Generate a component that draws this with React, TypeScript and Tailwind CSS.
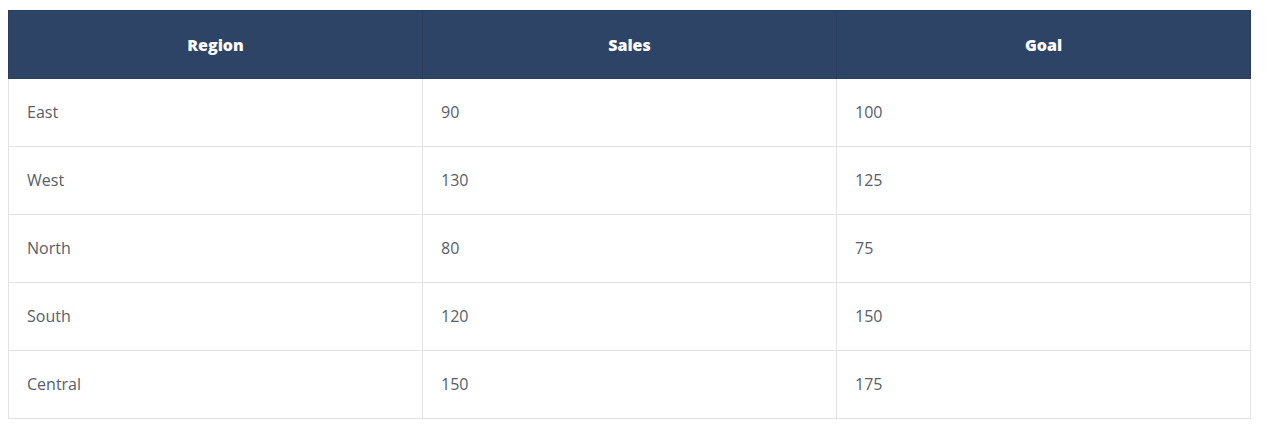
import React from 'react';

const rows = [
  { region: 'East', sales: 90, goal: 100 },
  { region: 'West', sales: 130, goal: 125 },
  { region: 'North', sales: 80, goal: 75 },
  { region: 'South', sales: 120, goal: 150 },
  { region: 'Central', sales: 150, goal: 175 },
];

const headers = ['Region', 'Sales', 'Goal'];

export default function App() {
  return (
    <div className="bg-white pl-2 pt-[10px] font-['Open_Sans',sans-serif]">
      <table className="w-[1243px] table-fixed border-collapse text-[16px]">
        <thead>
          <tr className="bg-[#2e4466]">
            {headers.map((h) => (
              <th
                key={h}
                className="h-[68px] border border-[#2a3d5c] text-center font-extrabold text-white"
              >
                {h}
              </th>
            ))}
          </tr>
        </thead>
        <tbody>
          {rows.map((row) => (
            <tr key={row.region}>
              <td className="h-[68px] border border-[#e2e2e2] pb-[2px] pl-[18px] text-[#575e68]">
                {row.region}
              </td>
              <td className="h-[68px] border border-[#e2e2e2] pb-[2px] pl-[18px] text-[#575e68]">
                {row.sales}
              </td>
              <td className="h-[68px] border border-[#e2e2e2] pb-[2px] pl-[18px] text-[#575e68]">
                {row.goal}
              </td>
            </tr>
          ))}
        </tbody>
      </table>
    </div>
  );
}
